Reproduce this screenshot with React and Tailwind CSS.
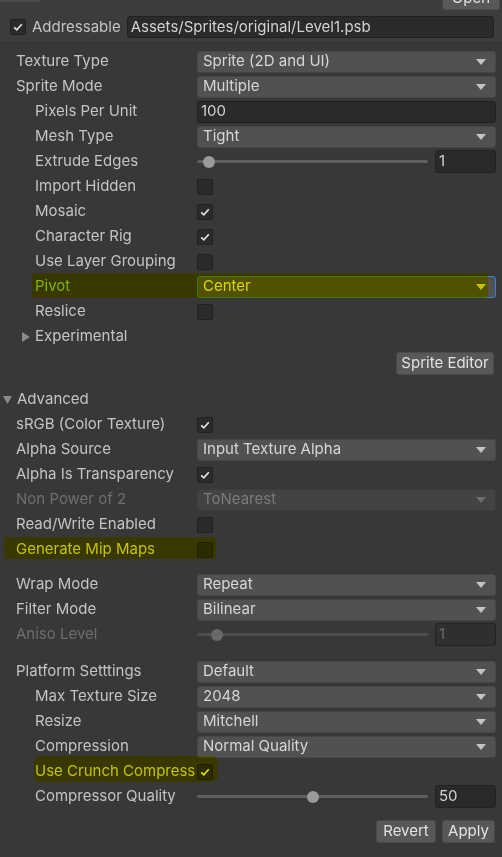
import React from "react";

const font = { fontFamily: "Inter, 'Noto Sans', sans-serif" };

function Check({ checked }) {
  return (
    <div className="w-4 h-4 rounded-[2px] bg-[#2b2b2b] border border-[#212121] flex items-center justify-center">
      {checked && (
        <svg width="12" height="12" viewBox="0 0 12 12">
          <path d="M2.2 6.3 L4.8 8.8 L9.8 3.2" fill="none" stroke="#e2e2e2" strokeWidth="1.7" />
        </svg>
      )}
    </div>
  );
}

function Arrow({ color = "#c4c4c4" }) {
  return (
    <svg width="10" height="6" viewBox="0 0 10 6">
      <path d="M0 0 L10 0 L5 6 Z" fill={color} />
    </svg>
  );
}

function Dropdown({ value, disabled }) {
  return (
    <div
      className={
        "h-[22px] rounded-[3px] flex items-center justify-between pl-[5px] pr-[9px] border " +
        (disabled
          ? "bg-[#434343] border-[#3c3c3c] text-[#7a7a7a]"
          : "bg-[#515151] border-[#464646] text-[#d6d6d6]")
      }
    >
      <span>{value}</span>
      <Arrow color={disabled ? "#6e6e6e" : "#c4c4c4"} />
    </div>
  );
}

function Slider({ pos, value, disabled }) {
  return (
    <div className="flex items-center gap-[7px]">
      <div className="flex-1 relative h-[12px] flex items-center">
        <div className={"w-full h-[3px] rounded " + (disabled ? "bg-[#4e4e4e]" : "bg-[#5e5e5e]")} />
        <div
          className={"absolute w-[12px] h-[12px] rounded-full " + (disabled ? "bg-[#686868]" : "bg-[#9a9a9a]")}
          style={{ left: pos - 6 }}
        />
      </div>
      <div
        className={
          "w-[61px] h-[23px] rounded-[3px] border border-[#222] flex items-center px-[3px] " +
          (disabled ? "bg-[#2f2f2f] text-[#6a6a6a]" : "bg-[#2a2a2a] text-[#d2d2d2]")
        }
      >
        {value}
      </div>
    </div>
  );
}

function Row({ label, indent, disabled, children }) {
  return (
    <div className="h-[25px] flex items-center">
      <div
        className={
          "w-[197px] shrink-0 whitespace-nowrap " +
          (indent ? "pl-[35px] " : "pl-[16px] ") +
          (disabled ? "text-[#6e6e6e]" : "text-[#c4c4c4]")
        }
      >
        {label}
      </div>
      <div className="flex-1 pr-[6px]">{children}</div>
    </div>
  );
}

function Foldout({ label, open, indent }) {
  return (
    <div className={"h-[25px] flex items-center text-[#c4c4c4] " + (indent ? "pl-[21px]" : "pl-[3px]")}>
      <svg width="10" height="10" viewBox="0 0 10 10" className="mr-[4px]">
        {open ? <path d="M0 1 L9 1 L4.5 9 Z" fill="#8a8a8a" /> : <path d="M1 0 L9 5 L1 10 Z" fill="#8a8a8a" />}
      </svg>
      <span>{label}</span>
    </div>
  );
}

function Btn({ children, w }) {
  return (
    <div className={"h-[23px] rounded-[3px] bg-[#585858] border border-[#4a4a4a] text-[#e2e2e2] flex items-center justify-center " + w}>
      {children}
    </div>
  );
}

function Mark({ className }) {
  return <div className={"absolute bg-[#ffff00] mix-blend-multiply rounded-[3px] pointer-events-none " + className} />;
}

export default function App() {
  return (
    <div className="w-[502px] h-[857px] bg-[#383838] text-[15px] overflow-hidden relative" style={font}>
      {/* HEADER */}
      <div className="h-[43px] bg-[#3c3c3c] border-b border-[#333] relative overflow-hidden">
        <div className="absolute left-0 top-0 w-[40px] h-[2px] bg-[#4c4c4c]" />
        <div className="flex justify-end pr-[2px]">
          <div className="mt-[-13px] w-[58px] h-[23px] rounded-[3px] bg-[#585858] border border-[#4a4a4a] text-[#e2e2e2] flex items-center justify-center">
            Open
          </div>
        </div>
        <div className="flex items-center mt-[6px] pl-[10px] pr-[8px]">
          <Check checked />
          <span className="ml-[6px] text-[#c4c4c4]">Addressable</span>
          <div className="ml-[6px] flex-1 h-[22px] rounded-[3px] bg-[#2a2a2a] border border-[#212121] text-[#d2d2d2] flex items-center px-[3px]">
            Assets/Sprites/original/Level1.psb
          </div>
        </div>
      </div>

      {/* MAIN */}
      <div className="pt-[6px]">
        <Row label="Texture Type"><Dropdown value="Sprite (2D and UI)" /></Row>
        <Row label="Sprite Mode"><Dropdown value="Multiple" /></Row>
        <Row label="Pixels Per Unit" indent>
          <div className="h-[22px] rounded-[3px] bg-[#2a2a2a] border border-[#212121] text-[#d2d2d2] flex items-center px-[3px]">100</div>
        </Row>
        <Row label="Mesh Type" indent><Dropdown value="Tight" /></Row>
        <Row label="Extrude Edges" indent><Slider pos={12} value="1" /></Row>
        <Row label="Import Hidden" indent><Check /></Row>
        <Row label="Mosaic" indent><Check checked /></Row>
        <Row label="Character Rig" indent><Check checked /></Row>
        <Row label="Use Layer Grouping" indent><Check /></Row>
        <div className="h-[25px] flex items-center">
          <div className="w-[197px] shrink-0 pl-[35px] text-[#7eb3f2]">Pivot</div>
          <div className="flex-1 pr-[6px]">
            <div className="h-[22px] rounded-[3px] flex items-center justify-between pl-[5px] pr-[9px] border border-[#3b7fd4] bg-[#515151] text-[#d6d6d6]">
              <span>Center</span>
              <Arrow />
            </div>
          </div>
        </div>
        <Row label="Reslice" indent><Check /></Row>
        <Foldout label="Experimental" indent />
        <div className="h-[28px] flex items-center justify-end pr-[8px]">
          <Btn w="w-[98px]">Sprite Editor</Btn>
        </div>

        <div className="h-[10px]" />
        <Foldout label="Advanced" open />
        <Row label="sRGB (Color Texture)"><Check checked /></Row>
        <Row label="Alpha Source"><Dropdown value="Input Texture Alpha" /></Row>
        <Row label="Alpha Is Transparency"><Check checked /></Row>
        <Row label="Non Power of 2" disabled><Dropdown value="ToNearest" disabled /></Row>
        <Row label="Read/Write Enabled"><Check /></Row>
        <Row label="Generate Mip Maps"><Check /></Row>

        <div className="h-[10px]" />
        <Row label="Wrap Mode"><Dropdown value="Repeat" /></Row>
        <Row label="Filter Mode"><Dropdown value="Bilinear" /></Row>
        <Row label="Aniso Level" disabled><Slider pos={20} value="1" disabled /></Row>

        <div className="h-[12px]" />
        <Row label="Platform Setttings"><Dropdown value="Default" /></Row>
        <Row label="Max Texture Size" indent><Dropdown value="2048" /></Row>
        <Row label="Resize" indent><Dropdown value="Mitchell" /></Row>
        <Row label="Compression" indent><Dropdown value="Normal Quality" /></Row>
        <Row label="Use Crunch Compress" indent><Check checked /></Row>
        <Row label="Compressor Quality" indent><Slider pos={116} value="50" /></Row>

        <div className="h-[11px]" />
        <div className="flex justify-end gap-[6px] pr-[7px]">
          <Btn w="w-[60px]">Revert</Btn>
          <Btn w="w-[53px]">Apply</Btn>
        </div>
      </div>

      {/* HIGHLIGHTER MARKS */}
      <Mark className="left-[32px] top-[273px] w-[456px] h-[25px]" />
      <Mark className="left-[4px] top-[537px] w-[212px] h-[22px]" />
      <Mark className="left-[34px] top-[756px] w-[184px] h-[26px] rounded-[6px]" />
    </div>
  );
}
